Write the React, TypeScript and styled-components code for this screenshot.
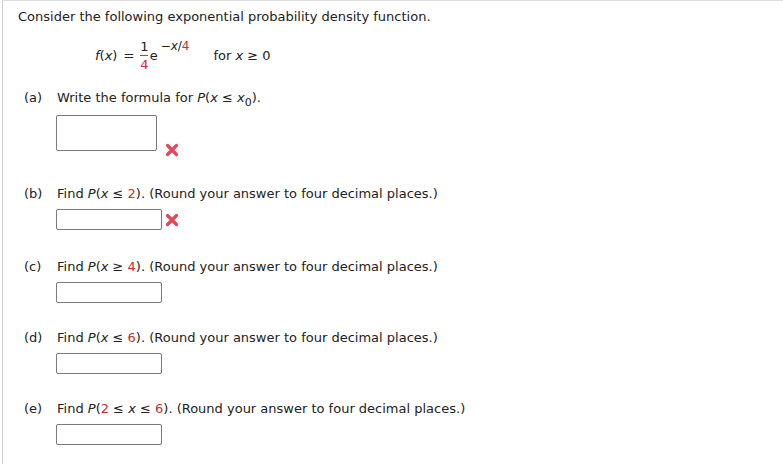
import React from "react";
import styled, { createGlobalStyle } from "styled-components";

const Global = createGlobalStyle`
  html, body { margin: 0; padding: 0; background: #fff; }
  body { font-family: Verdana, "DejaVu Sans", sans-serif; font-size: 13px; color: #222; }
`;

const Frame = styled.div`
  margin-left: 2px;
  border-left: 1px solid #cfcfcf;
  border-top: 1px solid #dcdcdc;
  height: 464px;
  padding: 8px 0 0 15px;
  box-sizing: border-box;
`;

const Intro = styled.div`
  line-height: 16px;
`;

const Formula = styled.div`
  display: flex;
  align-items: center;
  margin: 15px 0 0 77px;
  height: 30px;
`;

const Eq = styled.span`
  margin: 0 6px;
`;

const Frac = styled.span`
  display: inline-flex;
  flex-direction: column;
  align-items: center;
  font-size: 13px;
  line-height: 13px;
  margin-right: 1px;
`;

const Bar = styled.span`
  display: block;
  width: 8px;
  border-top: 1px solid #666;
  margin: 2px 0 2px;
`;

const Sup = styled.span`
  font-size: 12px;
  position: relative;
  top: -9px;
  margin-left: 3px;
`;

const Red = styled.span`
  color: #c0312f;
`;

const I = styled.i`
  font-style: italic;
`;

const Cond = styled.span`
  margin-left: 24px;
`;

const Part = styled.div<{ $top: number }>`
  display: grid;
  grid-template-columns: 33px auto;
  margin-top: ${(p) => p.$top}px;
  padding-left: 6px;
`;

const Label = styled.span`
  line-height: 16px;
`;

const Body = styled.div`
  display: flex;
  flex-direction: column;
`;

const Question = styled.div`
  line-height: 16px;
`;

const Sub = styled.sub`
  font-size: 11px;
  line-height: 0;
  vertical-align: -4px;
`;

const AnswerRow = styled.div<{ $gap: number }>`
  display: flex;
  align-items: center;
  margin-top: ${(p) => p.$gap}px;
  margin-left: -1px;
`;

const Box = styled.div<{ $w: number; $h: number }>`
  width: ${(p) => p.$w}px;
  height: ${(p) => p.$h}px;
  box-sizing: border-box;
  border: 1px solid #7a7a7a;
  border-radius: 2px;
  background: #fff;
  box-shadow: 0 0 1px rgba(0, 0, 0, 0.15);
`;

const Mark = styled.svg<{ $drop: number; $gap: number }>`
  margin-left: ${(p) => p.$gap}px;
  position: relative;
  top: ${(p) => p.$drop}px;
  flex: none;
`;

const Cross = ({ drop, gap }: { drop: number; gap: number }) => (
  <Mark $drop={drop} $gap={gap} width="14" height="14" viewBox="0 0 14 14">
    <path d="M2.5 2.5 L11.5 11.5 M11.5 2.5 L2.5 11.5" stroke="#e4475a" strokeWidth="3.2" strokeLinecap="round" />
  </Mark>
);

export default function App() {
  return (
    <>
      <Global />
      <Frame>
        <Intro>Consider the following exponential probability density function.</Intro>
        <Formula>
          <I>f</I>(<I>x</I>)<Eq>=</Eq>
          <Frac>
            <span>1</span>
            <Bar />
            <Red>4</Red>
          </Frac>
          e
          <Sup>
            −<I>x</I>/<Red>4</Red>
          </Sup>
          <Cond>
            for <I>x</I> ≥ 0
          </Cond>
        </Formula>

        <Part $top={20}>
          <Label>(a)</Label>
          <Body>
            <Question>
              Write the formula for <I>P</I>(<I>x</I> ≤ <I>x</I>
              <Sub>0</Sub>).
            </Question>
            <AnswerRow $gap={9}>
              <Box $w={101} $h={36} />
              <Cross drop={17} gap={8} />
            </AnswerRow>
          </Body>
        </Part>

        <Part $top={35}>
          <Label>(b)</Label>
          <Body>
            <Question>
              Find <I>P</I>(<I>x</I> ≤ <Red>2</Red>). (Round your answer to four decimal places.)
            </Question>
            <AnswerRow $gap={7}>
              <Box $w={106} $h={21} />
              <Cross drop={0} gap={3} />
            </AnswerRow>
          </Body>
        </Part>

        <Part $top={29}>
          <Label>(c)</Label>
          <Body>
            <Question>
              Find <I>P</I>(<I>x</I> ≥ <Red>4</Red>). (Round your answer to four decimal places.)
            </Question>
            <AnswerRow $gap={7}>
              <Box $w={106} $h={21} />
            </AnswerRow>
          </Body>
        </Part>

        <Part $top={27}>
          <Label>(d)</Label>
          <Body>
            <Question>
              Find <I>P</I>(<I>x</I> ≤ <Red>6</Red>). (Round your answer to four decimal places.)
            </Question>
            <AnswerRow $gap={7}>
              <Box $w={106} $h={21} />
            </AnswerRow>
          </Body>
        </Part>

        <Part $top={27}>
          <Label>(e)</Label>
          <Body>
            <Question>
              Find <I>P</I>(<Red>2</Red> ≤ <I>x</I> ≤ <Red>6</Red>). (Round your answer to four decimal places.)
            </Question>
            <AnswerRow $gap={7}>
              <Box $w={106} $h={21} />
            </AnswerRow>
          </Body>
        </Part>
      </Frame>
    </>
  );
}
